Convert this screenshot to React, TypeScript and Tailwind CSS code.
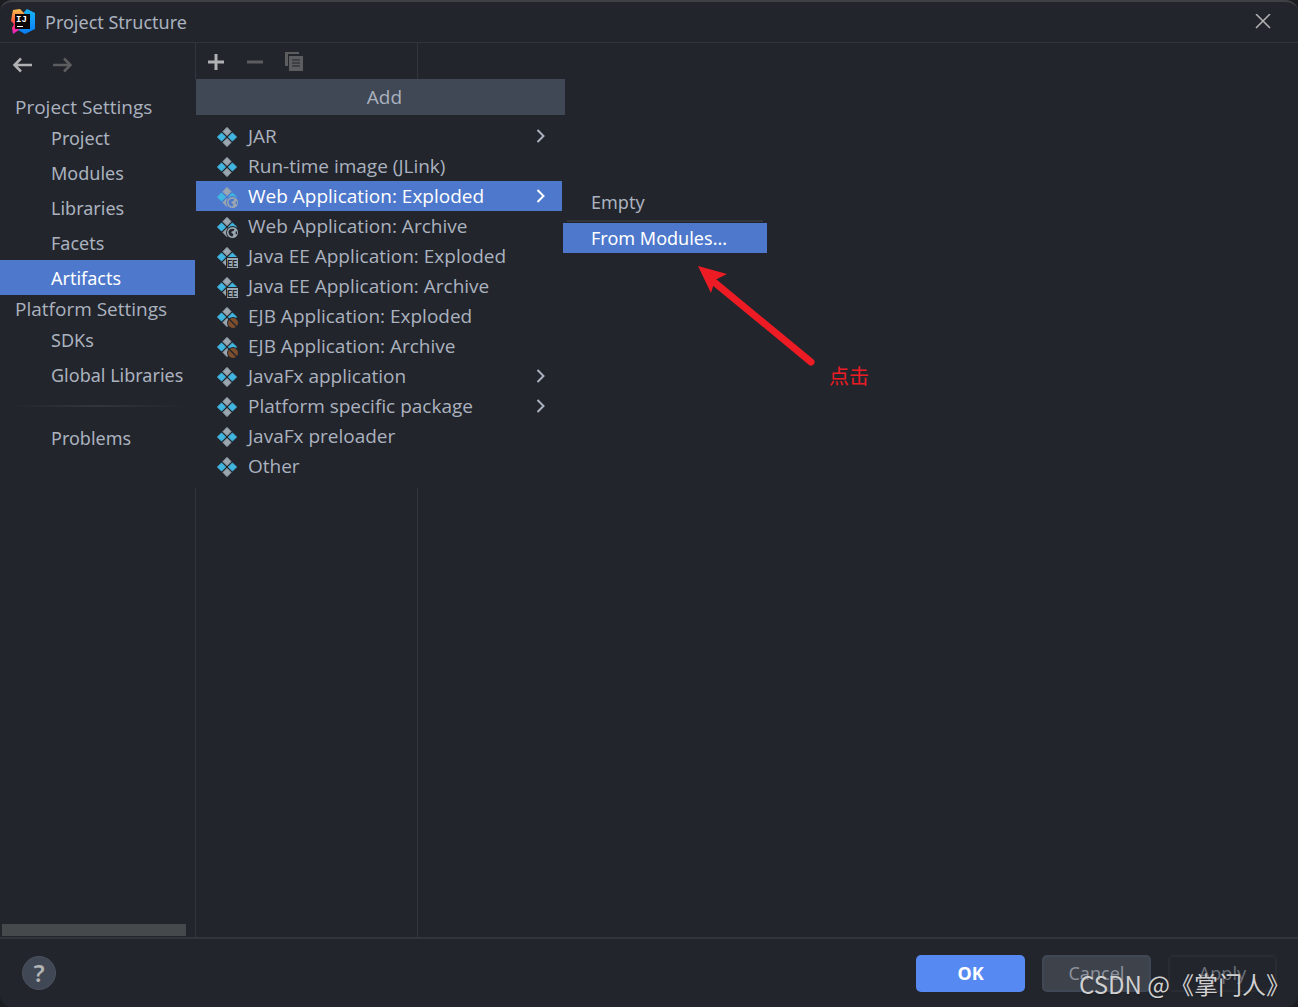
import type { ReactNode } from 'react'

type Badge = 'web' | 'ee' | 'ejb'

const projectSettings = ['Project', 'Modules', 'Libraries', 'Facets', 'Artifacts']
const platformSettings = ['SDKs', 'Global Libraries']

const artifactTypes: { label: string; badge?: Badge; submenu?: boolean }[] = [
  { label: 'JAR', submenu: true },
  { label: 'Run-time image (JLink)' },
  { label: 'Web Application: Exploded', badge: 'web', submenu: true },
  { label: 'Web Application: Archive', badge: 'web' },
  { label: 'Java EE Application: Exploded', badge: 'ee' },
  { label: 'Java EE Application: Archive', badge: 'ee' },
  { label: 'EJB Application: Exploded', badge: 'ejb' },
  { label: 'EJB Application: Archive', badge: 'ejb' },
  { label: 'JavaFx application', submenu: true },
  { label: 'Platform specific package', submenu: true },
  { label: 'JavaFx preloader' },
  { label: 'Other' },
]

function Logo() {
  return (
    <svg width="26" height="26" viewBox="0 0 26 26" aria-hidden="true">
      <defs>
        <linearGradient id="warm" x1="0" y1="0" x2="0" y2="1">
          <stop offset="0" stopColor="#fcc24d" />
          <stop offset="0.4" stopColor="#fb6a3c" />
          <stop offset="0.65" stopColor="#fe2a6b" />
          <stop offset="1" stopColor="#e02ad0" />
        </linearGradient>
        <linearGradient id="cool" x1="0" y1="0" x2="0" y2="1">
          <stop offset="0" stopColor="#19b5f5" />
          <stop offset="1" stopColor="#087cfa" />
        </linearGradient>
      </defs>
      <path d="M3 1 L10 0 L15 5 L14 20 L9 21 L3 25 L2 19 L4 15 L1 12 L2 6 Z" fill="url(#warm)" />
      <path d="M14 3 L17 0 L25 4 L25 20 L15 25 L8 21 L18 18 Z" fill="url(#cool)" />
      <rect x="5" y="5" width="15" height="15" fill="#0b0506" />
      <text x="6" y="13" fontFamily="Liberation Mono" fontWeight="700" fontSize="9" fill="#fff">
        IJ
      </text>
      <rect x="7" y="17" width="6" height="1" fill="#fff" />
    </svg>
  )
}

function ArtifactIcon({ badge }: { badge?: Badge }) {
  return (
    <svg width="24" height="24" viewBox="0 0 24 24" className="shrink-0" aria-hidden="true">
      <g strokeWidth="1" strokeLinejoin="round">
        <path d="M12 3.4 L16 7.6 L12 11.6 L8 7.6 Z" fill="#9aa7b0" stroke="#9aa7b0" />
        <path d="M12 14.4 L16 18.4 L12 22.6 L8 18.4 Z" fill="#9aa7b0" stroke="#9aa7b0" />
        <path d="M2.4 13 L6.6 9 L10.6 13 L6.6 17 Z" fill="#40b6e0" stroke="#40b6e0" />
        <path d="M13.4 13 L17.4 9 L21.6 13 L17.4 17 Z" fill="#40b6e0" stroke="#40b6e0" />
      </g>
      {badge === 'web' && (
        <>
          <circle cx="17.5" cy="18.5" r="6.5" className="fill-[#22252c] group-data-[active=true]:fill-[#4d78cc]" />
          <circle cx="17.5" cy="18.5" r="5.5" fill="#9aa7b0" />
          <path
            d="M13.6 17 C15 14.6 18 14.2 19.6 15.4 L18.4 17 L16.6 17.4 L16.4 19 L18.4 20 L17.6 22.6 C15 22.4 13 20 13.6 17 Z M20.6 17.6 L22 17.4 L22 20 L20.8 20.6 Z"
            className="fill-[#22252c] group-data-[active=true]:fill-[#4d78cc]"
          />
        </>
      )}
      {badge === 'ee' && (
        <>
          <rect x="11" y="13" width="13" height="11" className="fill-[#22252c]" />
          <rect x="12" y="14" width="11" height="10" fill="#9aa7b0" />
          <text x="12" y="23" fontFamily="Roboto" fontWeight="700" fontSize="9" className="fill-[#22252c]">
            EE
          </text>
        </>
      )}
      {badge === 'ejb' && (
        <>
          <circle cx="18" cy="19" r="6" className="fill-[#22252c]" />
          <circle cx="18" cy="19" r="5" fill="#7d4f2c" />
          <path d="M13.5 14.5 L22.5 23.5" stroke="#22252c" strokeWidth="1.4" />
        </>
      )}
    </svg>
  )
}

function NavItem({ label, active = false }: { label: string; active?: boolean }) {
  return (
    <button
      className={`flex h-[35px] w-full items-center pl-[51px] text-left whitespace-nowrap ${active ? 'bg-[#4d78cc] text-white' : ''}`}
    >
      {label}
    </button>
  )
}

function NavHeading({ children }: { children: ReactNode }) {
  return (
    <h2 className="flex h-[27px] items-center pl-[15px] font-['Open_Sans',sans-serif] text-[19px] whitespace-nowrap">
      {children}
    </h2>
  )
}

function AddMenu() {
  return (
    <div className="absolute top-9 -left-px z-10 w-[370px] bg-[#22252c] pb-[7px] pl-px">
      <div className="flex h-9 items-center justify-center bg-[#414855] pl-2 font-['Open_Sans',sans-serif] text-[19px]">
        Add
      </div>
      <ul className="mt-[6px] font-['Open_Sans',sans-serif] text-[19px]">
        {artifactTypes.map(({ label, badge, submenu }) => {
          const active = label === 'Web Application: Exploded'
          return (
            <li key={label}>
              <button
                data-active={active}
                className="group flex h-[30px] w-[366px] items-center gap-[9px] pr-4 pl-[19px] text-left data-[active=true]:bg-[#4d78cc] data-[active=true]:text-white"
              >
                <ArtifactIcon badge={badge} />
                <span className="flex-1">{label}</span>
                {submenu && (
                  <svg width="10" height="14" viewBox="0 0 10 14" fill="none" stroke="currentColor" strokeWidth="2">
                    <path d="M1.5 1 L7.5 7 L1.5 13" />
                  </svg>
                )}
              </button>
            </li>
          )
        })}
      </ul>
      <div className="absolute top-[102px] left-[368px] w-[204px] bg-[#22252c] pt-[6px]">
        <button className="flex h-[30px] w-full items-center pl-7">Empty</button>
        <hr className="mx-1 mt-[3px] mb-px border-t-2 border-[#32353c]" />
        <button className="flex h-[30px] w-full items-center bg-[#4d78cc] pl-7 text-white">From Modules...</button>
      </div>
    </div>
  )
}

export default function App() {
  return (
    <div className="bg-[#1b1d21] font-['Noto_Sans','Noto_Sans_CJK_SC',sans-serif] text-lg leading-6 text-[#abb2bf]">
      <div className="relative flex min-h-screen flex-col overflow-hidden rounded-xl border-t-2 border-[#3e4044] bg-[#22252c]">
        <header className="flex h-[41px] items-center border-b border-[#32353c] pr-[27px] pl-[10px]">
          <Logo />
          <h1 className="ml-[9px] flex-1">Project Structure</h1>
          <button aria-label="Close">
            <svg width="16" height="16" viewBox="0 0 16 16" stroke="#b4b4b4" strokeWidth="1.5">
              <path d="M1 0 L15 14 M15 0 L1 14" />
            </svg>
          </button>
        </header>

        <main className="flex flex-1">
          <nav className="flex w-[196px] shrink-0 flex-col border-r border-[#32353c]">
            <div className="flex h-[50px] items-start gap-5 pt-[14px] pl-3">
              <button aria-label="Back">
                <svg width="20" height="16" viewBox="0 0 20 16" fill="none" stroke="#afb1b3" strokeWidth="2.5">
                  <path d="M20 8 H2 M9 1.5 L2.5 8 L9 14.5" />
                </svg>
              </button>
              <button aria-label="Forward">
                <svg width="20" height="16" viewBox="0 0 20 16" fill="none" stroke="#5c5d5f" strokeWidth="2.5">
                  <path d="M1 8 H19 M12 1.5 L18.5 8 L12 14.5" />
                </svg>
              </button>
            </div>
            <NavHeading>Project Settings</NavHeading>
            {projectSettings.map((label) => (
              <NavItem key={label} label={label} active={label === 'Artifacts'} />
            ))}
            <NavHeading>Platform Settings</NavHeading>
            {platformSettings.map((label) => (
              <NavItem key={label} label={label} />
            ))}
            <div className="mx-2 my-[13px] h-[2px] bg-linear-to-r from-transparent via-[#32353c] to-transparent" />
            <NavItem label="Problems" />
            <div className="mt-auto mb-px ml-[2px] h-3 w-[184px] bg-[#46494c]" />
          </nav>

          <section className="relative w-[222px] shrink-0 border-r border-[#32353c]">
            <div className="flex h-9 items-center gap-[22px] pt-px pl-3">
              <button aria-label="Add">
                <svg width="16" height="16" viewBox="0 0 16 16" stroke="#afb1b3" strokeWidth="3">
                  <path d="M8 0 V16 M0 8 H16" />
                </svg>
              </button>
              <button aria-label="Remove">
                <svg width="17" height="16" viewBox="0 0 17 16" stroke="#5c5d5f" strokeWidth="3">
                  <path d="M1 8 H17" />
                </svg>
              </button>
              <button aria-label="Copy">
                <svg width="20" height="20" viewBox="0 0 20 20" fill="#5c5d5f">
                  <path d="M0 -1 H14 V2 H3 V14 H0 Z" />
                  <path d="M4 4 H18 V19 H4 Z" />
                  <path d="M7 8 H15 M7 11 H15 M7 14 H15" stroke="#22252c" />
                </svg>
              </button>
            </div>
            <AddMenu />
          </section>

          {/* callout pointing at the submenu entry */}
          <section className="relative flex-1">
            <svg className="absolute top-[222px] left-[278px]" width="120" height="104" viewBox="0 0 120 104">
              <path d="M18 17 L115 97" stroke="#ed1c24" strokeWidth="7" strokeLinecap="round" />
              <path d="M2 1 L31 9 L19 15 L15 28 Z" fill="#ed1c24" />
            </svg>
            <p className="absolute top-[320px] left-[411px] text-xl leading-7 text-[#ed1c24]">点击</p>
          </section>
        </main>

        <footer className="flex h-[70px] items-center gap-[17px] border-t-2 border-[#32353c] pr-[21px] pl-[22px]">
          <button
            aria-label="Help"
            className="mr-auto flex size-[34px] items-center justify-center rounded-full border border-[#4b515d] bg-[#414855] text-2xl font-semibold text-[#b4b4b4]"
          >
            ?
          </button>
          <button className="h-[37px] w-[109px] rounded-[5px] bg-[#568af2] font-bold text-white">OK</button>
          <button className="h-[37px] w-[109px] rounded-[5px] border-2 border-[#414855] bg-[#3d424b] text-[#8b919c]">
            Cancel
          </button>
          <button disabled className="h-[37px] w-[109px] rounded-[5px] border-2 border-[#292c33] text-[#6b7079]">
            Apply
          </button>
        </footer>

        <p className="pointer-events-none absolute right-2 bottom-[5px] font-['Noto_Sans_CJK_SC',sans-serif] text-2xl leading-9 text-[#d0d0d0] text-shadow-sm">
          CSDN @《掌门人》
        </p>
      </div>
    </div>
  )
}
